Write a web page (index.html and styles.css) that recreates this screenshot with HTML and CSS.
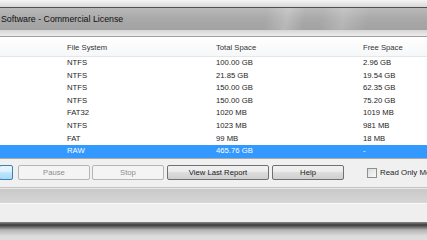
FILE: index.html
```html
<!DOCTYPE html>
<html lang="en">
<head>
    <meta charset="UTF-8">
    <title>Commercial License</title>
    <link rel="stylesheet" href="styles.css">
</head>
<body>
    <div class="frame-top"></div>
    <div class="titlebar">Software - Commercial License</div>
    <div class="menu-strip"></div>

    <div class="list">
        <div class="row header">
            <span></span><span>File System</span><span>Total Space</span><span>Free Space</span>
        </div>
        <div class="row"><span></span><span>NTFS</span><span>100.00 GB</span><span>2.96 GB</span></div>
        <div class="row"><span></span><span>NTFS</span><span>21.85 GB</span><span>19.54 GB</span></div>
        <div class="row"><span></span><span>NTFS</span><span>150.00 GB</span><span>62.35 GB</span></div>
        <div class="row"><span></span><span>NTFS</span><span>150.00 GB</span><span>75.20 GB</span></div>
        <div class="row"><span></span><span>FAT32</span><span>1020 MB</span><span>1019 MB</span></div>
        <div class="row"><span></span><span>NTFS</span><span>1023 MB</span><span>981 MB</span></div>
        <div class="row"><span></span><span>FAT</span><span>99 MB</span><span>18 MB</span></div>
        <div class="row selected"><span></span><span>RAW</span><span>465.76 GB</span><span>-</span></div>
    </div>

    <div class="actions">
        <button class="btn default"></button>
        <button class="btn pause" disabled>Pause</button>
        <button class="btn" disabled>Stop</button>
        <button class="btn wide">View Last Report</button>
        <button class="btn">Help</button>
        <label class="check"><span class="box"></span>Read Only Mode</label>
    </div>

    <div class="status-band"></div>
    <div class="panel"></div>
    <div class="frame-bottom"></div>
</body>
</html>
```

FILE: styles.css
```css
body {
    margin: 0;
    width: 427px;
    height: 240px;
    overflow: hidden;
    background-color: #f0f0f0;
    font-family: "Liberation Sans", Arial, sans-serif;
    font-size: 7.7px;
    color: #1e1e1e;
}
.frame-top {
    height: 7px;
    background: linear-gradient(to bottom, #f4f4f4, #d8d8d8);
    border-bottom: 1px solid #505050;
}
.titlebar {
    height: 22px;
    line-height: 22px;
    padding-left: 1px;
    font-size: 8.8px;
    color: #111;
    white-space: nowrap;
    background:
        linear-gradient(100deg, transparent 62%, rgba(255, 255, 255, 0.22) 67%, transparent 71%, transparent 75%, rgba(255, 255, 255, 0.18) 80%, transparent 86%),
        linear-gradient(to bottom, #b9b9b9, #a9a9a9 50%, #a2a2a2);
}
.menu-strip {
    height: 6px;
    background: linear-gradient(to bottom, #d6d6d6, #ececec);
    border-bottom: 1px solid #a0a0a0;
}
.list {
    background-color: #fff;
    border-bottom: 1px solid #a9a9a9;
}
.row {
    display: grid;
    grid-template-columns: 67px 149px 147px 1fr;
    height: 12.6px;
    line-height: 12.6px;
    white-space: nowrap;
}
.row.header {
    height: 19px;
    line-height: 21px;
    background: linear-gradient(to bottom, #ffffff, #f6f7f8);
    border-bottom: 1px solid #e4e6e8;
    color: #333;
}
.row.selected {
    background-color: #3399ff;
    color: #fff;
}
.actions {
    display: flex;
    align-items: center;
    height: 28px;
    border-bottom: 1px solid #c4c4c4;
    background-color: #f0f0f0;
}
.btn {
    flex-shrink: 0;
    height: 15px;
    width: 72px;
    margin-right: 3px;
    padding: 0;
    font-family: inherit;
    font-size: 7.7px;
    color: #1a1a1a;
    border: 1px solid #707070;
    border-radius: 2px;
    background: linear-gradient(to bottom, #f2f2f2, #ebebeb 45%, #dddddd 50%, #cfcfcf);
}
.btn:disabled {
    color: #8d8d8d;
    border-color: #b4b7b9;
    background: #f4f4f4;
}
.btn.default {
    width: 14px;
    margin-left: -1px;
    margin-right: 5px;
    border-color: #3c7fb1;
    background: linear-gradient(to bottom, #eaf6fd, #d9f0fc 50%, #bee6fd 50%, #a7d9f5);
}
.btn.pause {
    margin-right: 2px;
}
.btn.wide {
    width: 102px;
}
.check {
    display: flex;
    align-items: center;
    margin-left: 20px;
    white-space: nowrap;
    font-size: 7.9px;
}
.box {
    flex-shrink: 0;
    width: 8px;
    height: 8px;
    margin-right: 3px;
    border: 1px solid #8e8f8f;
    background: linear-gradient(135deg, #dcdcdc, #fafafa);
}
.status-band {
    height: 14px;
    border-top: 1px solid #e8e8e8;
    background: linear-gradient(to bottom, #c9c9c9, #d6d6d6);
    border-bottom: 1px solid #fafafa;
}
.panel {
    height: 18px;
    background-color: #efefef;
}
.frame-bottom {
    height: 40px;
    background: linear-gradient(to bottom, #8a8a8a, #3c3c3c 3px, #6a6a6a 5px, #b4b4b4 8px, #dcdcdc 14px, #e8e8e8);
}
```
